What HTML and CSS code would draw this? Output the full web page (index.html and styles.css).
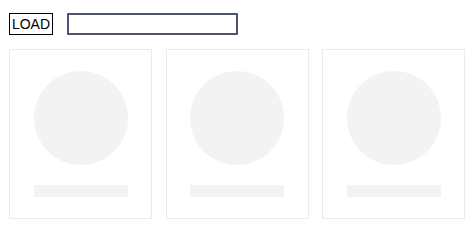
FILE: index.html
```html
<!DOCTYPE html>
<html lang="en">
<head>
    <meta charset="UTF-8">
    <meta name="viewport" content="width=device-width, initial-scale=1.0">
    <title>Loader</title>
    <link rel="stylesheet" href="styles.css">
</head>
<body>
    <div class="container">
        <!-- Toolbar -->
        <div class="toolbar">
            <button class="load-button">LOAD</button>
            <input type="text" class="load-input">
        </div>

        <!-- Placeholder cards -->
        <div class="cards">
            <div class="card">
                <div class="avatar"></div>
                <div class="line"></div>
            </div>
            <div class="card">
                <div class="avatar"></div>
                <div class="line"></div>
            </div>
            <div class="card">
                <div class="avatar"></div>
                <div class="line"></div>
            </div>
        </div>
    </div>
</body>
</html>
```

FILE: styles.css
```css
body {
    font-family: Arial, "Liberation Sans", sans-serif;
    margin: 0;
    padding: 0;
    background: #fff;
}

.container {
    padding: 13px 9px;
}

.toolbar {
    display: flex;
    align-items: center;
    gap: 14px;
}

.load-button {
    height: 22px;
    width: 44px;
    padding: 0;
    background: #fff;
    color: #000;
    border: 1px solid #000;
    border-radius: 0;
    font-family: Arial, "Liberation Sans", sans-serif;
    font-size: 14px;
}

.load-input {
    box-sizing: border-box;
    height: 22px;
    width: 171px;
    border: 2px solid #4b5573;
    border-radius: 1px;
    padding: 0 4px;
    outline: none;
}

.cards {
    display: grid;
    grid-template-columns: repeat(3, 1fr);
    gap: 13.5px;
    margin-top: 14px;
    width: 456px;
}

.card {
    box-sizing: border-box;
    height: 170px;
    border: 1px solid #ebebeb;
    display: flex;
    flex-direction: column;
    align-items: center;
    padding-top: 21px;
}

.avatar {
    width: 94px;
    height: 94px;
    border-radius: 50%;
    background: #f3f3f3;
}

.line {
    width: 94px;
    height: 12px;
    margin-top: 20px;
    background: #f3f3f3;
}
```
